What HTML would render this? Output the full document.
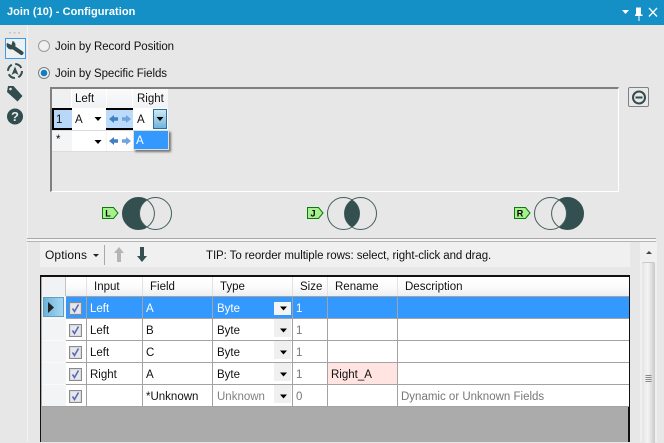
<!DOCTYPE html>
<html><head><meta charset="utf-8">
<style>
html,body{margin:0;padding:0}
body{width:664px;height:442px;position:relative;overflow:hidden;background:#e7e7e7;font-family:"Liberation Sans",sans-serif;font-size:11.5px;letter-spacing:0;color:#111}
.a{position:absolute}
.t{position:absolute;line-height:14px;white-space:nowrap}
svg{position:absolute;left:0;top:0}
</style></head><body>
<div class="a" style="left:0;top:0;width:664px;height:25px;background:#1490c6"></div>
<div class="t" style="left:7px;top:5px;color:#fff;font-weight:bold;font-size:11px;letter-spacing:.05px">Join (10) - Configuration</div>
<div class="a" style="left:27px;top:25px;width:1px;height:417px;background:#f3f3f3"></div>
<div class="a" style="left:5px;top:38px;width:19px;height:19px;border:1px solid #3f9be8;background:#eef1f3"></div>

<div class="t" style="left:55px;top:40px;letter-spacing:-.08px">Join by Record Position</div>
<div class="t" style="left:55px;top:67px;letter-spacing:-.08px">Join by Specific Fields</div>

<!-- group box -->
<div class="a" style="left:50px;top:87px;width:566px;height:102px;border-top:2px solid #808080;border-left:2px solid #808080;border-right:1px solid #fff;border-bottom:1px solid #fff;box-sizing:content-box"></div>
<!-- mini grid -->
<div class="a" style="left:52px;top:89px;width:116px;height:19px;background:linear-gradient(#fafafa,#f0f2f4)"></div>
<div class="a" style="left:52px;top:89px;width:19px;height:19px;background:#eef0f2"></div>
<div class="a" style="left:71px;top:89px;width:1px;height:19px;background:#fff"></div>
<div class="a" style="left:106px;top:89px;width:1px;height:19px;background:#fff"></div>
<div class="a" style="left:132px;top:89px;width:1px;height:19px;background:#fff"></div>
<div class="a" style="left:52px;top:108px;width:81px;height:22px;background:#000"></div>
<div class="a" style="left:54px;top:110px;width:18px;height:18px;background:#b9d8f8"></div>
<div class="a" style="left:72px;top:108px;width:34px;height:22px;background:#fff"></div>
<div class="a" style="left:106px;top:110px;width:27px;height:18px;background:#bcdafa"></div>
<div class="a" style="left:133px;top:108px;width:35px;height:22px;background:#fff"></div>
<div class="a" style="left:153px;top:109px;width:14px;height:20px;box-sizing:border-box;border:1px solid #2b6f9f;background:linear-gradient(#cfe8f7,#6fb4dc)"></div>
<div class="a" style="left:52px;top:131px;width:116px;height:20px;background:#f4f5f6"></div>
<div class="a" style="left:52px;top:130px;width:116px;height:1px;background:#dcdcdc"></div>
<div class="a" style="left:52px;top:151px;width:116px;height:1px;background:#dcdcdc"></div>
<div class="a" style="left:72px;top:131px;width:34px;height:20px;background:#fff"></div>
<div class="a" style="left:107px;top:131px;width:26px;height:20px;background:#fff"></div>
<div class="a" style="left:133px;top:130px;width:36px;height:20px;box-sizing:border-box;border:1px solid #ddd;background:#3399ff;box-shadow:2px 2px 2px #777"></div>
<div class="t" style="left:75px;top:92px">Left</div>
<div class="t" style="left:137px;top:92px">Right</div>
<div class="t" style="left:56px;top:113px">1</div>
<div class="t" style="left:75px;top:113px">A</div>
<div class="t" style="left:137px;top:113px">A</div>
<div class="t" style="left:136px;top:134px;color:#fff">A</div>
<div class="t" style="left:56px;top:133px">*</div>

<!-- minus button -->
<div class="a" style="left:628px;top:87px;width:21px;height:20px;box-sizing:border-box;border:1px solid #808080;border-radius:2px;background:#e9e9e9"></div>

<!-- divider -->
<div class="a" style="left:27px;top:238px;width:629px;height:1px;background:#a8a8a8"></div>
<div class="a" style="left:27px;top:241px;width:629px;height:1px;background:#b4b4b4"></div>
<div class="a" style="left:28px;top:239px;width:628px;height:2px;background:#f7f7f7"></div>

<!-- toolbar -->
<div class="a" style="left:40px;top:242px;width:590px;height:25px;background:#f0f0f0"></div>
<div class="a" style="left:104px;top:245px;width:1px;height:20px;background:#a9a9a9"></div>
<div class="t" style="left:45px;top:248px;font-size:12px;letter-spacing:.1px">Options</div>
<div class="t" style="left:206px;top:249px;letter-spacing:-.08px">TIP: To reorder multiple rows: select, right-click and drag.</div>

<!-- scrollbar -->
<div class="a" style="left:640px;top:242px;width:17px;height:200px;background:#f0f0f0"></div>
<div class="a" style="left:642px;top:262px;width:13px;height:180px;background:linear-gradient(90deg,#e4e4e4,#f4f4f4 45%,#c9c9c9);border-top:1px solid #c8c8c8;border-radius:2px 2px 0 0"></div>

<!-- grid -->
<div class="a" style="left:40px;top:275px;width:590px;height:167px;box-sizing:border-box;border:2px solid #111;border-bottom:0;border-left-width:1.5px;background:#ababab"></div>
<div class="a" style="left:42px;top:277px;width:587px;height:19px;background:linear-gradient(#fff,#fcfcfc 50%,#eceef0)"></div>
<div class="a" style="left:42px;top:296px;width:24px;height:110px;background:#f3f4f5"></div>
<div class="a" style="left:42px;top:277px;width:23px;height:19px;background:#f1f2f3"></div>
<div class="a" style="left:66px;top:297px;width:563px;height:109px;background:#fff"></div>
<div class="a" style="left:66px;top:297px;width:563px;height:21px;background:#3399ff"></div>
<div class="a" style="left:43px;top:297px;width:21px;height:20px;background:linear-gradient(90deg,#6db3d9,#a6d7f5);border:1px solid #5f9fc4;box-sizing:border-box"></div>
<div class="a" style="left:328px;top:363px;width:69px;height:21px;background:#ffe4e1"></div>
<!-- row lines -->
<div class="a" style="left:66px;top:296px;width:563px;height:1px;background:#a3a3a3"></div>
<div class="a" style="left:66px;top:318px;width:563px;height:1px;background:#a3a3a3"></div>
<div class="a" style="left:66px;top:340px;width:563px;height:1px;background:#a3a3a3"></div>
<div class="a" style="left:66px;top:362px;width:563px;height:1px;background:#a3a3a3"></div>
<div class="a" style="left:66px;top:384px;width:563px;height:1px;background:#a3a3a3"></div>
<div class="a" style="left:42px;top:406px;width:587px;height:1px;background:#a3a3a3"></div>
<div class="a" style="left:42px;top:318px;width:24px;height:1px;background:#fafafa"></div>
<div class="a" style="left:42px;top:340px;width:24px;height:1px;background:#fafafa"></div>
<div class="a" style="left:42px;top:362px;width:24px;height:1px;background:#fafafa"></div>
<div class="a" style="left:42px;top:384px;width:24px;height:1px;background:#fafafa"></div>
<!-- header separators -->
<div class="a" style="left:65px;top:277px;width:1px;height:19px;background:#c4c4c4"></div>
<div class="a" style="left:86px;top:277px;width:1px;height:19px;background:#e2e2e2"></div>
<div class="a" style="left:142px;top:277px;width:1px;height:19px;background:#e2e2e2"></div>
<div class="a" style="left:212px;top:277px;width:1px;height:19px;background:#e2e2e2"></div>
<div class="a" style="left:292px;top:277px;width:1px;height:19px;background:#e2e2e2"></div>
<div class="a" style="left:327px;top:277px;width:1px;height:19px;background:#e2e2e2"></div>
<div class="a" style="left:397px;top:277px;width:1px;height:19px;background:#e2e2e2"></div>
<!-- col lines -->
<div class="a" style="left:65px;top:296px;width:1px;height:110px;background:#f4f4f4"></div>
<div class="a" style="left:86px;top:296px;width:1px;height:111px;background:#a3a3a3"></div>
<div class="a" style="left:142px;top:296px;width:1px;height:111px;background:#a3a3a3"></div>
<div class="a" style="left:212px;top:296px;width:1px;height:111px;background:#a3a3a3"></div>
<div class="a" style="left:292px;top:296px;width:1px;height:111px;background:#a3a3a3"></div>
<div class="a" style="left:327px;top:296px;width:1px;height:111px;background:#a3a3a3"></div>
<div class="a" style="left:397px;top:296px;width:1px;height:111px;background:#a3a3a3"></div>
<!-- dropdown buttons -->
<div class="a" style="left:274px;top:302px;width:17px;height:13px;background:#f4f4f4"></div>
<div class="a" style="left:274px;top:319px;width:17px;height:18px;background:#f0f0f0"></div>
<div class="a" style="left:274px;top:341px;width:17px;height:18px;background:#f0f0f0"></div>
<div class="a" style="left:274px;top:363px;width:17px;height:18px;background:#f0f0f0"></div>
<div class="a" style="left:274px;top:385px;width:17px;height:18px;background:#f0f0f0"></div>

<!-- header text -->
<div class="t" style="left:94px;top:280px">Input</div>
<div class="t" style="left:150px;top:280px">Field</div>
<div class="t" style="left:220px;top:280px">Type</div>
<div class="t" style="left:300px;top:280px">Size</div>
<div class="t" style="left:335px;top:280px">Rename</div>
<div class="t" style="left:405px;top:280px">Description</div>
<!-- rows -->
<div class="t" style="left:90px;top:302px;color:#fff">Left</div>
<div class="t" style="left:146px;top:302px;color:#fff">A</div>
<div class="t" style="left:217px;top:302px;color:#fff">Byte</div>
<div class="t" style="left:296px;top:302px;color:#fff">1</div>
<div class="t" style="left:90px;top:324px">Left</div>
<div class="t" style="left:146px;top:324px">B</div>
<div class="t" style="left:217px;top:324px">Byte</div>
<div class="t" style="left:296px;top:324px;color:#777">1</div>
<div class="t" style="left:90px;top:346px">Left</div>
<div class="t" style="left:146px;top:346px">C</div>
<div class="t" style="left:217px;top:346px">Byte</div>
<div class="t" style="left:296px;top:346px;color:#777">1</div>
<div class="t" style="left:90px;top:368px">Right</div>
<div class="t" style="left:146px;top:368px">A</div>
<div class="t" style="left:217px;top:368px">Byte</div>
<div class="t" style="left:296px;top:368px;color:#777">1</div>
<div class="t" style="left:331px;top:368px">Right_A</div>
<div class="t" style="left:146px;top:390px">*Unknown</div>
<div class="t" style="left:217px;top:390px;color:#808080">Unknown</div>
<div class="t" style="left:296px;top:390px;color:#777">0</div>
<div class="t" style="left:401px;top:390px;color:#777">Dynamic or Unknown Fields</div>

<svg width="664" height="442" viewBox="0 0 664 442">
<defs>
<g id="cb"><rect x=".5" y=".5" width="12" height="12" fill="#d8dae0" stroke="#8a8a8a"/><rect x="2" y="2" width="9" height="9" fill="#e6e8ee"/><path d="M3.500 6.500l2 3 4-7" fill="none" stroke="#5a6ab0" stroke-width="1.600"/></g>
<g id="la"><path d="M0 0h7l-3.500 4z" fill="#000"/></g>
<g id="dbl"><path d="M0 4l5-4v2.200h4v3.600h-4v2.200z" fill="#3f7fc4"/><path d="M22 4l-5-4v2.200h-4v3.600h4v2.200z" fill="#6fa4dc"/></g>
<g id="tag"><path d="M.5 .5h11l4.500 5.500-4.500 5.500h-11z" fill="#a6f08e" stroke="#0a7a0a"/></g>
</defs>
<!-- title icons -->
<path d="M622 10h7l-3.500 4z" fill="#fff"/>
<path d="M636 7.500h5v7h1.500v1.500h-3v5h-1v-5h-3.500v-1.500h1z" fill="#fff"/>
<path d="M649 8l8 8.500M657 8l-8 8.500" stroke="#fff" stroke-width="1.300" fill="none"/>
<!-- dots -->
<path d="M9 32h2v1.500h-2zM13.500 32h2v1.500h-2zM18 32h2v1.500h-2z" fill="#c4c4c4"/>
<!-- wrench -->
<path d="M12 46.500l9.500 6.500" stroke="#314d4d" stroke-width="4" stroke-linecap="round"/>
<circle cx="11" cy="45" r="4.500" fill="#314d4d"/>
<path d="M6 42.500l5.500 2.500 1.500-6z" fill="#eef1f3"/>
<!-- target icon -->
<circle cx="15" cy="71" r="7" fill="none" stroke="#314d4d" stroke-width="2" stroke-dasharray="7.500 3.500"/>
<path d="M11.500 75l3.500-8.500 3.500 8.500-3.500-2z" fill="#314d4d"/>
<!-- tag icon -->
<path d="M8 86l-1 6 10.500 9.500 5-5.500-9-10z" fill="#314d4d"/><circle cx="10.500" cy="89" r="1.300" fill="#e7e7e7"/>
<!-- help -->
<circle cx="15" cy="116.500" r="8" fill="#314d4d"/>
<text x="15" y="121" text-anchor="middle" font-family="Liberation Sans" font-weight="bold" font-size="13" fill="#e7e7e7">?</text>
<!-- radios -->
<circle cx="44" cy="46" r="5.500" fill="#f0f0f0" stroke="#9a9a9a"/>
<circle cx="44" cy="73" r="5.500" fill="#eef2f5" stroke="#7d7d7d"/>
<circle cx="44" cy="73" r="3.300" fill="#137dbd"/>
<!-- mini grid arrows -->
<use href="#la" x="94.500" y="117"/>
<use href="#la" x="94.500" y="140"/>
<use href="#la" x="156.500" y="117"/>
<use href="#dbl" x="109" y="115"/>
<use href="#dbl" x="109" y="137"/>
<!-- minus -->
<circle cx="639" cy="97.500" r="6" fill="none" stroke="#314d4d" stroke-width="2"/>
<path d="M635.500 97.500h7" stroke="#314d4d" stroke-width="2"/>
<!-- tags -->
<use href="#tag" x="102" y="207"/><use href="#tag" x="307" y="207"/><use href="#tag" x="514" y="207"/>
<text x="108" y="216.500" text-anchor="middle" font-family="Liberation Sans" font-weight="bold" font-size="9" fill="#000">L</text>
<text x="313" y="216.500" text-anchor="middle" font-family="Liberation Sans" font-weight="bold" font-size="9" fill="#000">J</text>
<text x="520" y="216.500" text-anchor="middle" font-family="Liberation Sans" font-weight="bold" font-size="9" fill="#000">R</text>
<!-- venn L -->
<circle cx="138.500" cy="213.500" r="16" fill="#344f4f" stroke="#344f4f"/>
<circle cx="155.500" cy="213.500" r="16" fill="#e7e7e7" stroke="#445e5e"/>
<path d="M147 200a16 16 0 0 1 0 27" fill="none" stroke="#445e5e"/>
<!-- venn J -->
<circle cx="343.500" cy="213.500" r="16" fill="none" stroke="#445e5e"/>
<circle cx="360.500" cy="213.500" r="16" fill="none" stroke="#445e5e"/>
<path d="M352 200a16 16 0 0 1 0 27a16 16 0 0 1 0-27z" fill="#344f4f"/>
<!-- venn R -->
<circle cx="567.500" cy="213.500" r="16" fill="#344f4f" stroke="#344f4f"/>
<circle cx="550.500" cy="213.500" r="16" fill="#e7e7e7" stroke="#445e5e"/>
<path d="M559 200a16 16 0 0 0 0 27" fill="none" stroke="#445e5e"/>
<!-- toolbar icons -->
<path d="M93 254h6l-3 3z" fill="#222"/>
<path d="M119 247l5 6h-3v9h-4v-9h-3z" fill="#b5b5b5"/>
<path d="M142 262l5-6h-3v-9h-4v9h-3z" fill="#344f4f"/>
<!-- scroll -->
<path d="M646 254l3-3 3 3z" fill="#444"/>
<path d="M645.500 375.500h6M645.500 377.500h6M645.500 379.500h6M645.500 381.500h6" stroke="#8a8a8a" stroke-width="1"/>
<!-- row pointer -->
<path d="M48 302v11l6-5.500z" fill="#222"/>
<!-- checks -->
<use href="#cb" x="69" y="302"/><use href="#cb" x="69" y="324"/><use href="#cb" x="69" y="346"/><use href="#cb" x="69" y="368"/><use href="#cb" x="69" y="390"/>
<!-- row dropdown arrows -->
<use href="#la" x="280" y="306.500"/><use href="#la" x="280" y="328.500"/><use href="#la" x="280" y="350.500"/><use href="#la" x="280" y="372.500"/><use href="#la" x="280" y="394.500"/>
</svg>
</body></html>
